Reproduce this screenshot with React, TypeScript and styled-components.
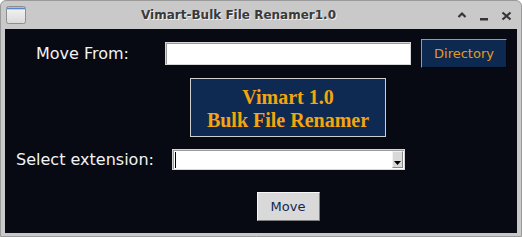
import React from "react";
import styled, { createGlobalStyle } from "styled-components";

const Global = createGlobalStyle`
  html, body { margin: 0; padding: 0; background: #ffffff; overflow: hidden; }
  #root { width: 522px; height: 237px; }
`;

const Window = styled.div`
  width: 522px;
  height: 237px;
  box-sizing: border-box;
  background: #c9c9c9;
  border: 1px solid #9a9a9a;
  border-radius: 6px 6px 0 0;
  display: flex;
  flex-direction: column;
`;

const TitleBar = styled.div`
  height: 28px;
  display: flex;
  align-items: center;
  padding: 0 4px 0 5px;
  flex: none;
`;

const AppIcon = styled.svg`
  width: 20px;
  height: 18px;
  flex: none;
`;

const Title = styled.div`
  flex: 1;
  text-align: center;
  font-family: "DejaVu Sans", sans-serif;
  font-weight: bold;
  font-size: 12px;
  color: #3a3a3a;
  text-shadow: 1px 1px 0 rgba(255, 255, 255, 0.75);
  white-space: nowrap;
`;

const Controls = styled.div`
  display: flex;
  flex: none;
`;

const ControlIcon = styled.svg`
  width: 22px;
  height: 28px;
  display: block;
`;

const Panel = styled.main`
  flex: 1;
  margin: 0 4px 3px;
  background: #070a12;
  display: grid;
  grid-template-columns: 160px 246px 106px;
  grid-template-rows: 29px 69px 33px 51px;
  align-items: end;
  align-content: start;
  padding-top: 10px;
  box-sizing: border-box;
`;

const Label = styled.div<{ $h: number; $row: number; $shift?: number }>`
  grid-column: 1;
  grid-row: ${(p) => p.$row};
  justify-self: center;
  height: ${(p) => p.$h}px;
  margin-right: ${(p) => p.$shift ?? 0}px;
  display: flex;
  align-items: center;
  font-family: "DejaVu Sans", sans-serif;
  font-size: 16px;
  color: #f3f3f3;
  white-space: nowrap;
`;

const Entry = styled.input`
  grid-column: 2;
  grid-row: 1;
  align-self: center;
  width: 246px;
  height: 23px;
  box-sizing: border-box;
  margin: 0;
  padding: 0 3px;
  background: #ffffff;
  border: 1px solid #d6d6d6;
  box-shadow: inset 1px 1px 0 #9c9c9c;
  outline: none;
  font-family: "DejaVu Sans", sans-serif;
  font-size: 13px;
`;

const NavyButton = styled.button`
  grid-column: 3;
  grid-row: 1;
  justify-self: center;
  width: 86px;
  height: 29px;
  box-sizing: border-box;
  margin: 0;
  padding: 0;
  background: #0e2950;
  border-style: solid;
  border-width: 1px;
  border-color: #8e9bb0 #020510 #020510 #8e9bb0;
  color: #e39b1c;
  font-family: "DejaVu Sans", sans-serif;
  font-size: 13px;
`;

const Banner = styled.div`
  grid-column: 2;
  grid-row: 2;
  justify-self: center;
  width: 196px;
  height: 59px;
  box-sizing: border-box;
  background: #0e2a52;
  border: 1px solid #cfcfcf;
  display: flex;
  flex-direction: column;
  align-items: center;
  justify-content: center;
  font-family: "Liberation Serif", serif;
  font-weight: bold;
  font-size: 20px;
  line-height: 23px;
  color: #f4a50c;
  padding-top: 2px;
`;

const Combo = styled.div`
  grid-column: 2;
  grid-row: 3;
  justify-self: center;
  width: 233px;
  height: 21px;
  box-sizing: border-box;
  display: flex;
  background: #ffffff;
  border: 1px solid #d6d6d6;
  box-shadow: inset 1px 1px 0 #9c9c9c;
  padding: 1px;
`;

const ComboField = styled.div`
  flex: 1;
  display: flex;
  align-items: stretch;
  padding: 1px 0 0 1px;
`;

const Caret = styled.span`
  width: 1px;
  background: #000000;
`;

const ComboArrow = styled.div`
  width: 11px;
  box-sizing: border-box;
  background: #d9d9d9;
  border-style: solid;
  border-width: 1px;
  border-color: #f2f2f2 #8a8a8a #8a8a8a #f2f2f2;
  display: flex;
  align-items: flex-end;
  justify-content: center;
  padding-bottom: 2px;
`;

const ArrowGlyph = styled.svg`
  width: 7px;
  height: 4px;
  display: block;
`;

const GreyButton = styled.button`
  grid-column: 2;
  grid-row: 4;
  justify-self: center;
  width: 63px;
  height: 29px;
  box-sizing: border-box;
  margin: 0;
  padding: 0;
  background: #d9d9d9;
  border-style: solid;
  border-width: 1px;
  border-color: #f7f7f7 #7f7f7f #7f7f7f #f7f7f7;
  color: #10284e;
  font-family: "DejaVu Sans", sans-serif;
  font-size: 13px;
`;

export default function App() {
  return (
    <>
      <Global />
      <Window>
        <TitleBar>
          <AppIcon viewBox="0 0 20 18">
            <defs>
              <linearGradient id="ig" x1="0" y1="0" x2="0" y2="1">
                <stop offset="0" stopColor="#f6f6f6" />
                <stop offset="1" stopColor="#dadada" />
              </linearGradient>
            </defs>
            <rect x="0.5" y="0.5" width="19" height="17" rx="2" fill="url(#ig)" stroke="#8e8e8e" />
            <rect x="1" y="1.5" width="18" height="1.8" fill="#5a86c6" />
          </AppIcon>
          <Title>Vimart-Bulk File Renamer1.0</Title>
          <Controls>
            <ControlIcon viewBox="0 0 22 28">
              <polyline points="7.5,16 11,12.5 14.5,16" fill="none" stroke="#353535" strokeWidth="2.2" />
            </ControlIcon>
            <ControlIcon viewBox="0 0 22 28">
              <rect x="7" y="17" width="8" height="2.5" fill="#353535" />
            </ControlIcon>
            <ControlIcon viewBox="0 0 22 28">
              <path d="M7.5 11.5 L15.5 18.5 M15.5 11.5 L7.5 18.5" stroke="#353535" strokeWidth="2.2" />
            </ControlIcon>
          </Controls>
        </TitleBar>
        <Panel>
          <Label $h={29} $row={1} $shift={5}>Move From:</Label>
          <Entry />
          <NavyButton>Directory</NavyButton>
          <Banner>
            <span>Vimart 1.0</span>
            <span>Bulk File Renamer</span>
          </Banner>
          <Label $h={21} $row={3}>Select extension:</Label>
          <Combo>
            <ComboField>
              <Caret />
            </ComboField>
            <ComboArrow>
              <ArrowGlyph viewBox="0 0 7 4">
                <polygon points="0,0 7,0 3.5,4" fill="#000000" />
              </ArrowGlyph>
            </ComboArrow>
          </Combo>
          <GreyButton>Move</GreyButton>
        </Panel>
      </Window>
    </>
  );
}
